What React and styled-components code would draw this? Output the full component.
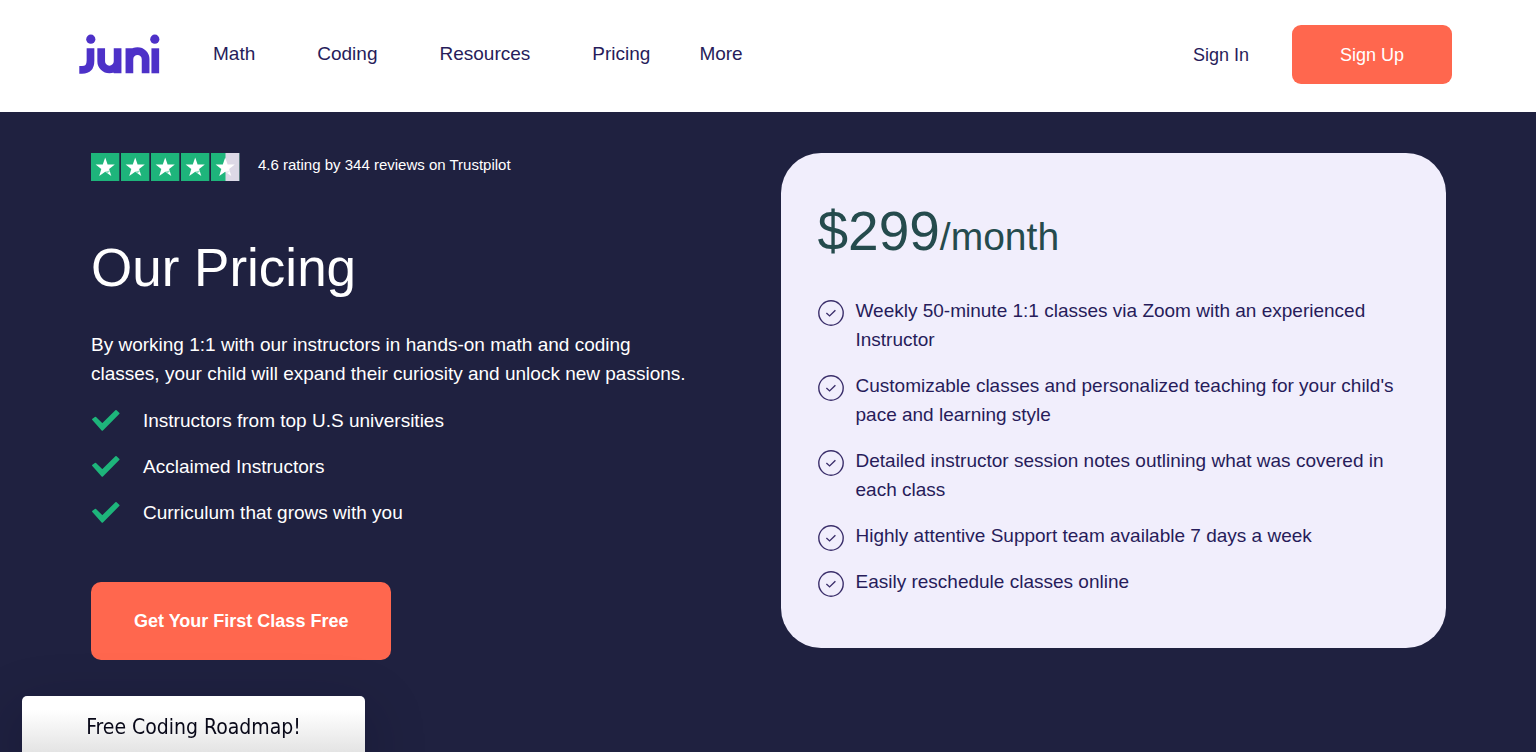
import React from "react";
import styled, { createGlobalStyle } from "styled-components";

const GlobalStyle = createGlobalStyle`
  *, *::before, *::after { box-sizing: border-box; }
  html, body { margin: 0; background: #1f2140; }
  body { font-family: "Liberation Sans", Helvetica, Arial, sans-serif; font-size: 19px; line-height: 29px; }
  button { font: inherit; cursor: pointer; border: 0; }
  h1, p, ul { margin: 0; padding: 0; }
  ul { list-style: none; }
`;

const Page = styled.div`
  display: flex;
  flex-direction: column;
  min-height: 100vh;
`;

const Header = styled.header`
  display: flex;
  align-items: center;
  height: 112px;
  padding: 0 84px 4px 79px;
  background: #fff;
`;

const LogoLink = styled.a`
  display: flex;
  margin-right: 53px;
`;

const Nav = styled.nav`
  display: flex;
  flex: 1;
  gap: 62px;
  padding-bottom: 2px;
`;

const NavPair = styled.div`
  display: flex;
  gap: 49px;
`;

const NavLink = styled.a`
  color: #271c5a;
  font-size: 19px;
  text-decoration: none;
`;

const SignInLink = styled(NavLink)`
  padding-top: 2px;
  font-size: 18px;
`;

const Account = styled.div`
  display: flex;
  align-items: center;
  gap: 43px;
`;

const OrangeButton = styled.button`
  border-radius: ${(p) => (p.$large ? 10 : 9)}px;
  padding: ${(p) => (p.$large ? "25px 43px 24px" : "16px 48px 14px")};
  font-size: 18px;
  font-weight: ${(p) => (p.$large ? 700 : 400)};
  color: #fff;
  background: #ff674e;
`;

const Hero = styled.main`
  display: grid;
  grid-template-columns: 1fr 1fr;
  gap: 24px;
  align-items: start;
  flex: 1;
  padding: 41px 90px 92px 91px;
  background: #1f2140;
`;

const Intro = styled.section`
  color: #fff;
`;

const Rating = styled.div`
  display: flex;
  align-items: center;
  gap: 18px;
  height: 28px;
  font-size: 15px;
  line-height: 24px;
`;

const RatingText = styled.span`
  padding-bottom: 5px;
`;

const Title = styled.h1`
  margin: 55px 0 30px;
  font-size: 53px;
  font-weight: 400;
  line-height: 64px;
`;

const Lead = styled.p`
  max-width: 606px;
  margin-bottom: 18px;
`;

const Benefits = styled.ul`
  display: grid;
  gap: 17px;
  margin-bottom: 55px;
`;

const Benefit = styled.li`
  display: flex;
  align-items: center;
  gap: 23px;
`;

const Card = styled.section`
  padding: 42px 37px 52px;
  border-radius: 40px;
  color: #271c5a;
  background: #f1eefc;
`;

const Price = styled.p`
  margin-bottom: 23px;
  font-size: 55px;
  line-height: 72px;
  color: #254b4d;
`;

const Period = styled.span`
  font-size: 39px;
`;

const Features = styled.ul`
  display: grid;
  gap: 17px;
`;

const Feature = styled.li`
  display: grid;
  grid-template-columns: 26px 1fr;
  gap: 12px;

  svg { margin: 4px 0 -1px; }
`;

const Roadmap = styled.button`
  position: fixed;
  left: 22px;
  bottom: 0;
  width: 343px;
  height: 56px;
  padding: 7px 0 0;
  border-radius: 5px 5px 0 0;
  font-family: "DejaVu Sans Condensed", Tahoma, sans-serif;
  font-size: 21px;
  color: #080818;
  background: linear-gradient(#fff 25%, #e4e4e4);
  box-shadow: 0 20px 60px rgba(10, 10, 30, 0.3);
`;

function Logo() {
  return (
    <svg width="81" height="40" viewBox="0 0 81 40" role="img" aria-label="juni" fill="none">
      <g stroke="#4d31c8" strokeWidth="7.7">
        <path d="M11.5 14.3V26.5C11.5 33 8.5 35.8 3 35.8H0.3" />
        <path d="M22.2 14.3V27.3A8.2 8.2 0 0 0 38.6 27.3V14.3M38.6 26V39.3" />
        <path d="M50.4 39.3V14.3M50.4 25.2A8.1 8.1 0 0 1 66.6 25.2V39.3" />
        <path d="M76.3 14.3V39.3" />
      </g>
      <circle cx="11.8" cy="5.2" r="4.6" fill="#4d31c8" />
      <circle cx="75.8" cy="5.2" r="4.6" fill="#4d31c8" />
    </svg>
  );
}

function Stars() {
  return (
    <svg width="149" height="28" viewBox="0 0 149 28" role="img" aria-label="4.6 out of 5 stars">
      {[0, 30, 60, 90, 120].map((x) => (
        <g key={x} transform={`translate(${x} 0)`}>
          <path d="M0 0H28.3V28H0Z" fill="#1eb57b" />
          {x === 120 && <path d="M14.5 0H28.3V28H14.5Z" fill="#dcd8e6" />}
          <path
            d="M14.2 4.6L16.6 11.4H23.8L18.1 15.9L20.3 22.9L14.2 18.8L8.2 22.9L10.3 15.9L4.6 11.4H11.8Z"
            fill="#fff"
          />
          <path d="M14.2 18.8L18.5 17.4L18.8 18.6L16.4 20.2Z" fill={x === 120 ? "#dcd8e6" : "#1eb57b"} opacity="0.5" />
        </g>
      ))}
    </svg>
  );
}

function GreenCheck() {
  return (
    <svg width="29" height="22" viewBox="0 0 29 22" fill="none" aria-hidden="true">
      <path
        d="M2 9.4L4.4 7.6L11.3 14.4L25 1L27.6 3.4L11.3 19.8Z"
        fill="#1eb57b"
        stroke="#1eb57b"
        strokeWidth="1.8"
        strokeLinejoin="round"
      />
    </svg>
  );
}

function CircleCheck() {
  return (
    <svg width="26" height="26" viewBox="0 0 26 26" fill="none" stroke="#3b2f6b" aria-hidden="true">
      <circle cx="13" cy="13" r="12.2" strokeWidth="1.4" />
      <path d="M8.4 13L11.6 15.9L17.4 10.2" strokeWidth="1.4" />
    </svg>
  );
}

const benefits = [
  "Instructors from top U.S universities",
  "Acclaimed Instructors",
  "Curriculum that grows with you",
];

const features = [
  "Weekly 50-minute 1:1 classes via Zoom with an experienced Instructor",
  "Customizable classes and personalized teaching for your child's pace and learning style",
  "Detailed instructor session notes outlining what was covered in each class",
  "Highly attentive Support team available 7 days a week",
  "Easily reschedule classes online",
];

export default function App() {
  return (
    <Page>
      <GlobalStyle />
      <Header>
        <LogoLink href="#home"><Logo /></LogoLink>
        <Nav>
          <NavLink href="#math">Math</NavLink>
          <NavLink href="#coding">Coding</NavLink>
          <NavLink href="#resources">Resources</NavLink>
          <NavPair>
            <NavLink href="#pricing">Pricing</NavLink>
            <NavLink href="#more">More</NavLink>
          </NavPair>
        </Nav>
        <Account>
          <SignInLink href="#sign-in">Sign In</SignInLink>
          <OrangeButton type="button">Sign Up</OrangeButton>
        </Account>
      </Header>
      <Hero>
        <Intro>
          <Rating>
            <Stars />
            <RatingText>4.6 rating by 344 reviews on Trustpilot</RatingText>
          </Rating>
          <Title>Our Pricing</Title>
          <Lead>
            By working 1:1 with our instructors in hands-on math and coding
            classes, your child will expand their curiosity and unlock new passions.
          </Lead>
          <Benefits>
            {benefits.map((text) => (
              <Benefit key={text}><GreenCheck />{text}</Benefit>
            ))}
          </Benefits>
          <OrangeButton type="button" $large>Get Your First Class Free</OrangeButton>
        </Intro>
        <Card>
          <Price>$299<Period>/month</Period></Price>
          <Features>
            {features.map((text) => (
              <Feature key={text}><CircleCheck /><span>{text}</span></Feature>
            ))}
          </Features>
        </Card>
      </Hero>
      <Roadmap type="button">Free Coding Roadmap!</Roadmap>
    </Page>
  );
}
